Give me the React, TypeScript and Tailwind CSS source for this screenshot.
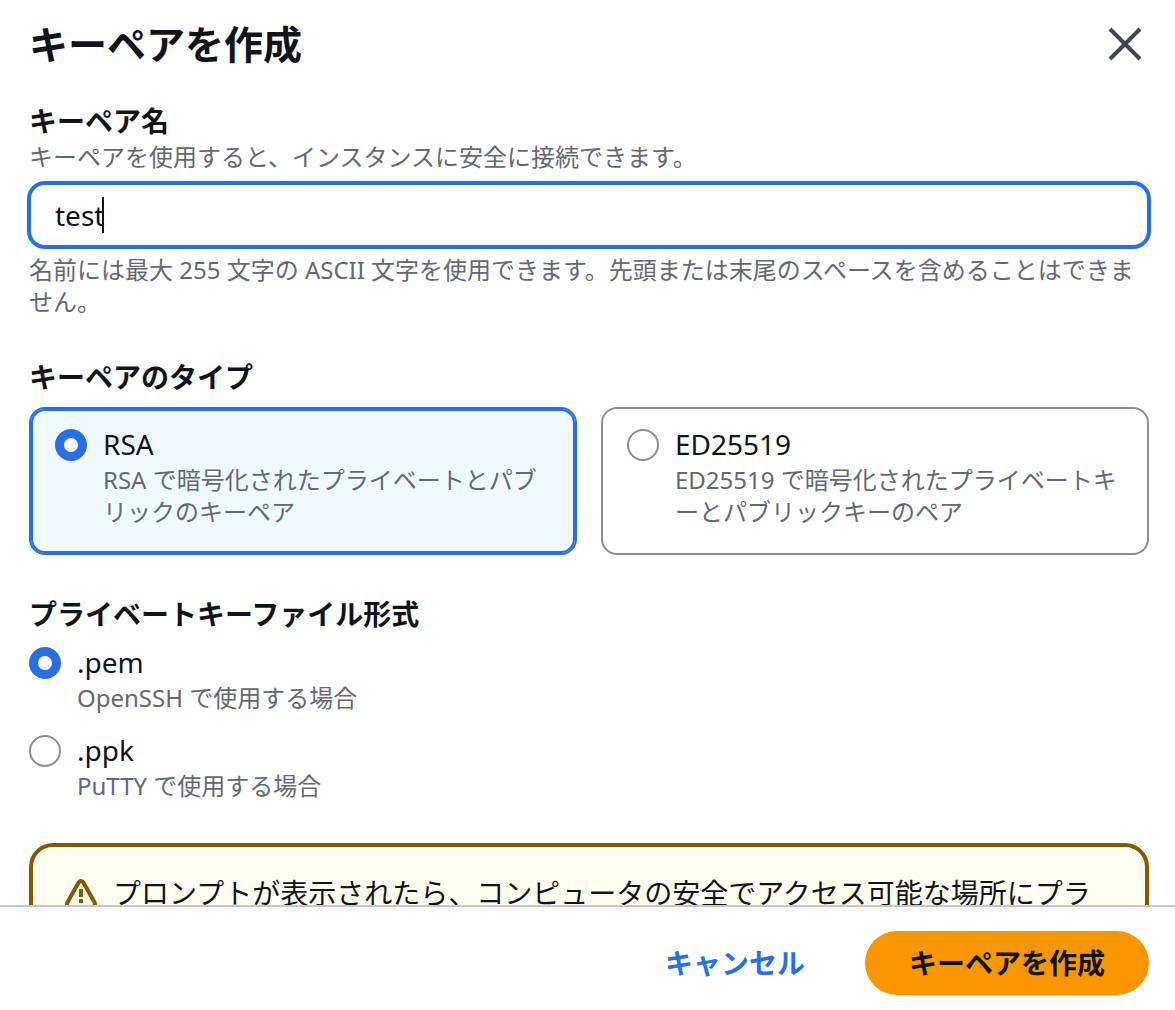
import { useLayoutEffect, useRef, useState } from "react";
import clsx from "clsx";

const keyTypes = [
  { value: "rsa", title: "RSA", description: "RSA で暗号化されたプライベートとパブリックのキーペア" },
  { value: "ed25519", title: "ED25519", description: "ED25519 で暗号化されたプライベートキーとパブリックキーのペア" }
];

const fileFormats = [
  { value: "pem", title: ".pem", description: "OpenSSH で使用する場合" },
  { value: "ppk", title: ".ppk", description: "PuTTY で使用する場合" }
];

const radioClass =
  "mt-[5px] size-8 shrink-0 appearance-none rounded-full border-2 border-[#8c8c94] bg-white outline-none checked:border-9 checked:border-[#276fe3]";

type RadioOptionProps = {
  name: string;
  value: string;
  title: string;
  description: string;
  checked: boolean;
  onChange: (value: string) => void;
};

function RadioOption({ name, value, title, description, checked, onChange }: RadioOptionProps) {
  return (
    <>
      <input
        type="radio"
        id={`${name}-${value}`}
        name={name}
        value={value}
        checked={checked}
        onChange={() => onChange(value)}
        className={radioClass}
      />
      <span className="min-w-0 flex-1">
        <span className="block text-[28px] leading-10">{title}</span>
        <span className="block text-2xl leading-8 text-[#656871]">{description}</span>
      </span>
    </>
  );
}

export default function App() {
  const [name, setName] = useState("test");
  const [keyType, setKeyType] = useState("rsa");
  const [format, setFormat] = useState("pem");
  const [caretLeft, setCaretLeft] = useState(0);
  const nameRef = useRef<HTMLInputElement>(null);

  // keep the two pixel caret at the end of the typed name
  useLayoutEffect(() => {
    const input = nameRef.current;
    const context = document.createElement("canvas").getContext("2d");
    if (!input || !context) return;
    const style = getComputedStyle(input);
    context.font = `${style.fontSize} ${style.fontFamily}`;
    const start = parseFloat(style.paddingLeft) + parseFloat(style.borderLeftWidth);
    setCaretLeft(Math.round(start + context.measureText(name).width) - 2);
  }, [name]);

  return (
    <div
      role="dialog"
      aria-labelledby="dialog-title"
      className="flex h-screen flex-col bg-white font-['Noto_Sans','Noto_Sans_CJK_JP',sans-serif] text-[#0f141a]"
    >
      <header className="flex shrink-0 items-center justify-between pt-5 pr-8 pl-[29px]">
        <h1 id="dialog-title" className="text-[39px] leading-12 font-bold">キーペアを作成</h1>
        <button type="button" aria-label="閉じる" className="text-[#424650]">
          <svg viewBox="0 0 36 36" className="size-9" fill="none" stroke="currentColor" strokeWidth="4">
            <path d="M3 3l30 30M33 3L3 33" />
          </svg>
        </button>
      </header>

      <main className="min-h-0 flex-1 overflow-y-auto pt-[33px] pr-[26px] pb-8 pl-[29px] [scrollbar-width:none]">
        <div>
          <label htmlFor="key-name" className="block text-[28px] leading-10 font-bold">キーペア名</label>
          <p id="key-name-description" className="text-2xl leading-8 text-[#656871]">
            キーペアを使用すると、インスタンスに安全に接続できます。
          </p>
          <div className="relative -mx-0.5 mt-2">
            <input
              ref={nameRef}
              id="key-name"
              type="text"
              autoFocus
              value={name}
              onChange={(e) => setName(e.target.value)}
              aria-describedby="key-name-description key-name-hint"
              className="block h-17 w-full rounded-[18px] border-4 border-[#276fe3] px-6 text-[28px] caret-transparent outline-none"
            />
            <span
              aria-hidden="true"
              className="pointer-events-none absolute inset-y-4 w-0.5 bg-[#0f141a]"
              style={{ left: caretLeft }}
            />
          </div>
          <p id="key-name-hint" className="mt-[5px] text-2xl leading-8 text-[#656871]">
            名前には最大 255 文字の ASCII 文字を使用できます。先頭または末尾のスペースを含めることはできません。
          </p>
        </div>

        <fieldset className="mt-[39px]">
          <legend className="mb-2.5 text-[28px] leading-10 font-bold">キーペアのタイプ</legend>
          <div className="grid grid-cols-2 gap-6">
            {keyTypes.map((type) => (
              <label
                key={type.value}
                htmlFor={`key-type-${type.value}`}
                className={clsx(
                  "flex gap-4 rounded-2xl border-2 px-6 pt-[15px] pb-[25px]",
                  keyType === type.value
                    ? "border-[#276fe3] bg-[#f0f9ff] inset-ring-2 inset-ring-[#276fe3]"
                    : "border-[#8c8c94] bg-white"
                )}
              >
                <RadioOption name="key-type" {...type} checked={keyType === type.value} onChange={setKeyType} />
              </label>
            ))}
          </div>
        </fieldset>

        <fieldset className="mt-[39px]">
          <legend className="mb-2 text-[28px] leading-10 font-bold">プライベートキーファイル形式</legend>
          <div className="flex flex-col gap-4">
            {fileFormats.map((item) => (
              <label key={item.value} htmlFor={`file-format-${item.value}`} className="flex gap-4">
                <RadioOption name="file-format" {...item} checked={format === item.value} onChange={setFormat} />
              </label>
            ))}
          </div>
        </fieldset>

        <div className="mt-[41px] flex gap-4 rounded-3xl border-4 border-[#855900] bg-[#fffef0] px-8 py-[26px]">
          <svg viewBox="0 0 32 32" className="mt-1 size-8 shrink-0 text-[#855900]" fill="none" stroke="currentColor" strokeWidth="4">
            <path d="M13.6 5.4L2.5 25.2Q1 30 5 30H27Q31 30 29.5 25.2L18.4 5.4Q16 2.4 13.6 5.4Z" strokeLinejoin="round" />
            <path d="M16 12v8M16 22v4" />
          </svg>
          <p className="text-[28px] leading-10">
            プロンプトが表示されたら、コンピュータの安全でアクセス可能な場所にプラ
          </p>
        </div>
      </main>

      <footer className="flex shrink-0 items-center justify-end gap-4 border-t-2 border-[#c6c6cd] pt-6 pr-[26px] pb-[15px]">
        <button type="button" className="h-16 rounded-full px-11 text-[28px] font-bold text-[#276fe3]">
          キャンセル
        </button>
        <button type="button" className="h-16 rounded-full bg-[#fa9700] px-11 text-[28px] font-bold">
          キーペアを作成
        </button>
      </footer>
    </div>
  );
}
